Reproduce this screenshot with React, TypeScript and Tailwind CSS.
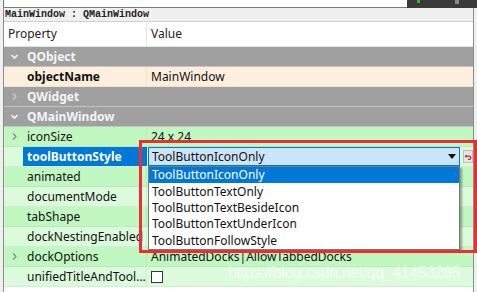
import React from "react";

type Row =
  | { kind: "cat"; name: string; open: boolean }
  | { kind: "prop"; name: string; value?: React.ReactNode; tone: "green" | "pale" | "cream"; arrow?: boolean; bold?: boolean; selected?: boolean; combo?: boolean };

const rows: Row[] = [
  { kind: "cat", name: "QObject", open: true },
  { kind: "prop", name: "objectName", value: "MainWindow", tone: "cream", bold: true },
  { kind: "cat", name: "QWidget", open: false },
  { kind: "cat", name: "QMainWindow", open: true },
  { kind: "prop", name: "iconSize", value: "24 x 24", tone: "green", arrow: true },
  { kind: "prop", name: "toolButtonStyle", tone: "pale", bold: true, selected: true, combo: true },
  { kind: "prop", name: "animated", tone: "green" },
  { kind: "prop", name: "documentMode", tone: "pale" },
  { kind: "prop", name: "tabShape", tone: "green" },
  { kind: "prop", name: "dockNestingEnabled", tone: "pale" },
  { kind: "prop", name: "dockOptions", value: "AnimatedDocks|AllowTabbedDocks", tone: "green", arrow: true },
  { kind: "prop", name: "unifiedTitleAndTool...", tone: "pale", value: <span className="mt-[1px] block h-[12px] w-[12px] border border-[#333] bg-white" /> },
];

const toneBg = {
  green: "bg-[#c1f7c1]",
  pale: "bg-[#dcfbdc]",
  cream: "bg-[#feefdc]",
};

const options = [
  "ToolButtonIconOnly",
  "ToolButtonTextOnly",
  "ToolButtonTextBesideIcon",
  "ToolButtonTextUnderIcon",
  "ToolButtonFollowStyle",
];

function Chevron({ open, color }: { open: boolean; color: string }) {
  return (
    <svg width="9" height="9" viewBox="0 0 9 9" fill="none">
      {open ? (
        <polyline points="1.5,3 4.5,6 7.5,3" stroke={color} strokeWidth="1.6" />
      ) : (
        <polyline points="3,1.5 6,4.5 3,7.5" stroke={color} strokeWidth="1.3" />
      )}
    </svg>
  );
}

function ResetIcon() {
  return (
    <svg width="8" height="8" viewBox="0 0 8 8" fill="none">
      <path d="M2 3.2 H5.2 A1.6 1.6 0 0 1 5.2 6.4 H4" stroke="#c8262c" strokeWidth="1.3" />
      <polygon points="0.5,3.2 2.6,1.4 2.6,5" fill="#c8262c" />
    </svg>
  );
}

function PropertyRow({ row }: { row: Row }) {
  if (row.kind === "cat") {
    return (
      <div className="flex h-[20px] items-center border-b border-[#c4c4c4] bg-[#a0a0a0]">
        <div className="flex w-[19px] justify-center pl-[2px]">
          <Chevron open={row.open} color={row.open ? "#f4f4f4" : "#cfcfcf"} />
        </div>
        <span className="pl-[4px] text-[12px] font-bold text-[#f4f4f4]">{row.name}</span>
      </div>
    );
  }
  return (
    <div className={`flex h-[20px] border-b border-black/[0.05] ${toneBg[row.tone]}`}>
      <div className="flex w-[19px] items-center justify-center pl-[2px]">
        {row.arrow && <Chevron open={false} color="#8a8a8a" />}
      </div>
      <div
        className={`flex w-[124px] items-center overflow-hidden whitespace-nowrap border-r border-black/[0.05] pl-[4px] text-[12px] ${
          row.selected ? "bg-[#0078d7] text-white" : "text-[#111]"
        } ${row.bold ? "font-bold" : ""}`}
      >
        {row.name}
      </div>
      <div className="flex flex-1 items-center pl-[1px] text-[12px] text-[#111]">
        {row.combo ? (
          <div className="flex h-full items-center">
            <div className="flex h-[19px] w-[312px] items-center justify-between border border-[#0078d7] bg-[#cce4f7] pl-[3px] pr-[3px]">
              <span>ToolButtonIconOnly</span>
              <svg width="8" height="5" viewBox="0 0 8 5">
                <polygon points="0,0 8,0 4,5" fill="#111" />
              </svg>
            </div>
            <div className="ml-[3px] flex h-[13px] w-[10px] items-center justify-center border border-[#bdbdbd] bg-[#e6e6e6]">
              <ResetIcon />
            </div>
          </div>
        ) : (
          <span className="pl-[3px]">{row.value}</span>
        )}
      </div>
    </div>
  );
}

export default function App() {
  return (
    <div
      className="relative h-[292px] w-[477px] overflow-hidden bg-[#f0f0f0]"
      style={{ fontFamily: '"Noto Sans", "Open Sans", sans-serif' }}
    >
      <div className="flex h-[8px]">
        <div className="w-[3px]" />
        <div className="flex-1 border-b border-l border-[#7a7a7a] bg-white" />
        <div className="relative w-[70px] bg-[#3a3a3a]">
          <span className="absolute left-[10px] top-0 h-[3px] w-[3px] bg-[#22c022]" />
          <span className="absolute left-[48px] top-0 h-[4px] w-[4px] bg-[#8a8a8a]" />
        </div>
      </div>

      <div className="flex">
        <div className="w-[3px]" />
        <div className="w-[471px] border-l border-r border-[#8c8c8c] bg-white">
          <div
            className="flex h-[14px] items-center border-b border-[#d0d0d0] bg-[#f0f0f0] pl-[1px] text-[10px] font-bold leading-none text-[#222]"
            style={{ fontFamily: '"Liberation Mono", "DejaVu Sans Mono", monospace' }}
          >
            MainWindow : QMainWindow
          </div>
          <div className="flex h-[25px] items-center border-b border-[#e4e4e4] text-[12px] text-[#222]">
            <div className="flex h-full w-[143px] items-center border-r border-[#e4e4e4] pl-[4px]">Property</div>
            <div className="pl-[4px]">Value</div>
          </div>
          {rows.map((r) => (
            <PropertyRow key={r.name} row={r} />
          ))}
          <div className="h-[10px] bg-white" />
        </div>
      </div>

      {/* open combo list */}
      <div className="absolute left-[148px] top-[166px] w-[312px] border border-[#7a7a7a] bg-white text-[12px] text-[#111] shadow-[2px_2px_2px_rgba(0,0,0,0.35)]">
        {options.map((o, i) => (
          <div
            key={o}
            className={`flex h-[16.4px] items-center pl-[3px] ${i === 0 ? "bg-[#0078d7] text-white" : ""}`}
          >
            {o}
          </div>
        ))}
      </div>

      {/* annotation box */}
      <div className="pointer-events-none absolute left-[139px] top-[140px] h-[113px] w-[338px] border-[3px] border-[#ec2d32]" />

      <div
        className="pointer-events-none absolute left-[228px] top-[261px] whitespace-nowrap text-[16px] tracking-[-0.4px] text-white/70"
        style={{ fontFamily: '"Liberation Sans", Arial, sans-serif' }}
      >
        https://blog.csdn.net/qq_41453285
      </div>
    </div>
  );
}
